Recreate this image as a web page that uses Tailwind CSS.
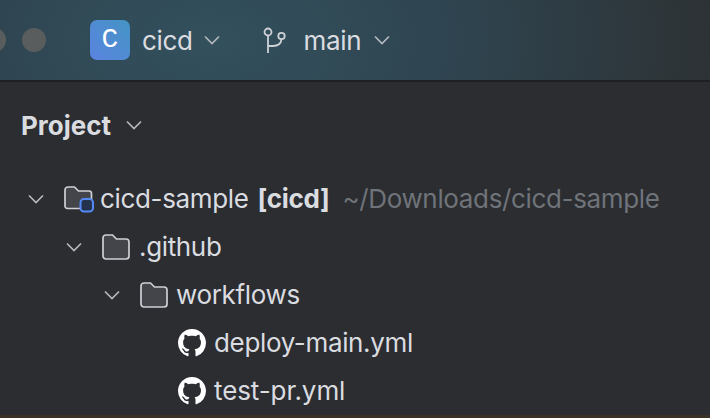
<!DOCTYPE html>
<html lang="en">
<head>
<meta charset="UTF-8">
<title>Project</title>
<script src="https://cdn.jsdelivr.net/npm/@tailwindcss/browser@4"></script>
</head>
<body class="bg-[#2b2d30] font-['Inter',sans-serif] text-[26px] tracking-[-0.35px] text-[#dadce0] overflow-hidden">
<div class="w-[710px] h-[418px] flex flex-col overflow-hidden">
    <!-- title bar -->
    <div class="h-[82px] shrink-0 border-b-2 border-[#1e1f22] bg-[radial-gradient(ellipse_520px_300px_at_210px_40px,#33505d_0%,#2f4551_45%,#2d3133_100%)] flex items-center">
        <div class="w-6 h-6 -ml-[18px] shrink-0 rounded-full bg-[#5a5d5e]"></div>
        <div class="ml-4 w-6 h-6 shrink-0 rounded-full bg-[#5a5d5e]"></div>
        <div class="ml-11 w-10 h-10 shrink-0 rounded-[7px] bg-gradient-to-tr from-[#5a83e0] to-[#4394c4] flex items-center justify-center text-white text-[28px] tracking-normal font-['Liberation_Mono',monospace]">C</div>
        <span class="ml-[12px] pt-[2px] leading-none">cicd</span>
        <svg class="ml-[11px] w-4 h-4" viewBox="0 0 16 16" fill="none" stroke="#b4b8bf" stroke-width="1.7"><path d="M1 4.500 8 11.500 15 4.500"/></svg>
        <svg class="ml-[43px] w-[24px] h-[28px]" viewBox="0 0 24 28" fill="none" stroke="#ced0d6" stroke-width="1.800"><circle cx="5" cy="6" r="3.500"/><circle cx="18.500" cy="10" r="3.200"/><path d="M5 9.500V27M5 20h5c5 0 8-2 8.500-6.800"/></svg>
        <span class="ml-[17px] pt-[2px] leading-none">main</span>
        <svg class="ml-[13px] w-4 h-4" viewBox="0 0 16 16" fill="none" stroke="#b4b8bf" stroke-width="1.7"><path d="M1 4.500 8 11.500 15 4.500"/></svg>
    </div>

    <!-- tool window header -->
    <div class="h-[86px] shrink-0 pl-[21px] flex items-center">
        <span class="font-bold tracking-normal">Project</span>
        <svg class="ml-[15px] w-4 h-4" viewBox="0 0 16 16" fill="none" stroke="#b4b8bf" stroke-width="1.7"><path d="M1 4.500 8 11.500 15 4.500"/></svg>
    </div>

    <!-- tree -->
    <div class="flex-1 pt-[7px]">
        <div class="h-12 flex items-center pl-7">
            <svg class="w-4 h-4" viewBox="0 0 16 16" fill="none" stroke="#b4b8bf" stroke-width="1.7"><path d="M1 4.500 8 11.500 15 4.500"/></svg>
            <svg class="ml-5 w-[30px] h-[30px]" viewBox="0 0 30 30" fill="none"><path d="M1 6a3 3 0 0 1 3-3h6.500l4 4H25a2.500 2.500 0 0 1 2.500 2.500V22a2.500 2.500 0 0 1-2.500 2.500H3.500A2.500 2.500 0 0 1 1 22Z" fill="#43454a" stroke="#ced0d6" stroke-width="1.700"/><rect x="16.500" y="15" width="12.500" height="12.500" rx="3.500" fill="#25324d" stroke="#548af7" stroke-width="2"/></svg>
            <span class="ml-[6px] pb-[2px]">cicd-sample</span>
            <span class="ml-[9px] pb-[2px] font-bold">[cicd]</span>
            <span class="ml-[13px] pb-[2px] text-[#6f737a]">~/Downloads/cicd-sample</span>
        </div>
        <div class="h-12 flex items-center pl-[66px]">
            <svg class="w-4 h-4" viewBox="0 0 16 16" fill="none" stroke="#b4b8bf" stroke-width="1.7"><path d="M1 4.500 8 11.500 15 4.500"/></svg>
            <svg class="ml-5 w-7 h-7" viewBox="0 0 28 28" fill="none"><path d="M1 5a3 3 0 0 1 3-3h6.500l4 4H24a3 3 0 0 1 3 3v14a3 3 0 0 1-3 3H4a3 3 0 0 1-3-3Z" fill="#43454a" stroke="#ced0d6" stroke-width="1.700"/></svg>
            <span class="ml-[9px] pb-[2px]">.github</span>
        </div>
        <div class="h-12 flex items-center pl-[104px]">
            <svg class="w-4 h-4" viewBox="0 0 16 16" fill="none" stroke="#b4b8bf" stroke-width="1.7"><path d="M1 4.500 8 11.500 15 4.500"/></svg>
            <svg class="ml-5 w-7 h-7" viewBox="0 0 28 28" fill="none"><path d="M1 5a3 3 0 0 1 3-3h6.500l4 4H24a3 3 0 0 1 3 3v14a3 3 0 0 1-3 3H4a3 3 0 0 1-3-3Z" fill="#43454a" stroke="#ced0d6" stroke-width="1.700"/></svg>
            <span class="ml-2 pb-[2px]">workflows</span>
        </div>
        <div class="h-12 flex items-center pl-[178px]">
            <svg class="w-7 h-7" viewBox="0 0 16 16" fill="#ffffff"><path d="M8 0c4.420 0 8 3.580 8 8a8.013 8.013 0 0 1-5.450 7.590c-.400.080-.550-.170-.550-.380 0-.270.010-1.130.010-2.200 0-.750-.250-1.230-.540-1.480 1.780-.200 3.650-.880 3.650-3.950 0-.880-.310-1.590-.820-2.150.080-.200.360-1.020-.080-2.120 0 0-.670-.220-2.200.820-.640-.180-1.320-.270-2-.270-.680 0-1.360.090-2 .270-1.530-1.030-2.200-.820-2.200-.820-.440 1.100-.160 1.920-.080 2.120-.510.560-.820 1.280-.820 2.150 0 3.060 1.860 3.750 3.640 3.950-.230.200-.440.550-.510 1.070-.460.210-1.610.550-2.330-.660-.150-.240-.600-.830-1.230-.820-.670.010-.270.380.010.530.340.190.730.900.820 1.130.160.450.680 1.310 2.690.940 0 .670.010 1.300.010 1.490 0 .210-.150.450-.550.380A7.995 7.995 0 0 1 0 8c0-4.420 3.580-8 8-8Z"/></svg>
            <span class="ml-2 pb-[2px]">deploy-main.yml</span>
        </div>
        <div class="h-12 flex items-center pl-[178px]">
            <svg class="w-7 h-7" viewBox="0 0 16 16" fill="#ffffff"><path d="M8 0c4.420 0 8 3.580 8 8a8.013 8.013 0 0 1-5.450 7.590c-.400.080-.550-.170-.550-.380 0-.270.010-1.130.010-2.200 0-.750-.250-1.230-.540-1.480 1.780-.200 3.650-.880 3.650-3.950 0-.880-.310-1.590-.820-2.150.080-.200.360-1.020-.080-2.120 0 0-.670-.220-2.200.820-.640-.180-1.320-.270-2-.270-.680 0-1.360.090-2 .270-1.530-1.030-2.200-.820-2.200-.820-.440 1.100-.160 1.920-.080 2.120-.510.560-.820 1.280-.820 2.150 0 3.060 1.860 3.750 3.640 3.950-.230.200-.440.550-.510 1.070-.460.210-1.610.550-2.330-.660-.150-.240-.600-.830-1.230-.820-.670.010-.270.380.010.530.340.190.730.900.820 1.130.160.450.680 1.310 2.690.940 0 .670.010 1.300.010 1.490 0 .210-.150.450-.550.380A7.995 7.995 0 0 1 0 8c0-4.420 3.580-8 8-8Z"/></svg>
            <span class="ml-2 pb-[2px] tracking-[-0.1px]">test-pr.yml</span>
        </div>
    </div>
    <div class="h-1 shrink-0 bg-[#3b3226]"></div>
</div>
</body>
</html>
